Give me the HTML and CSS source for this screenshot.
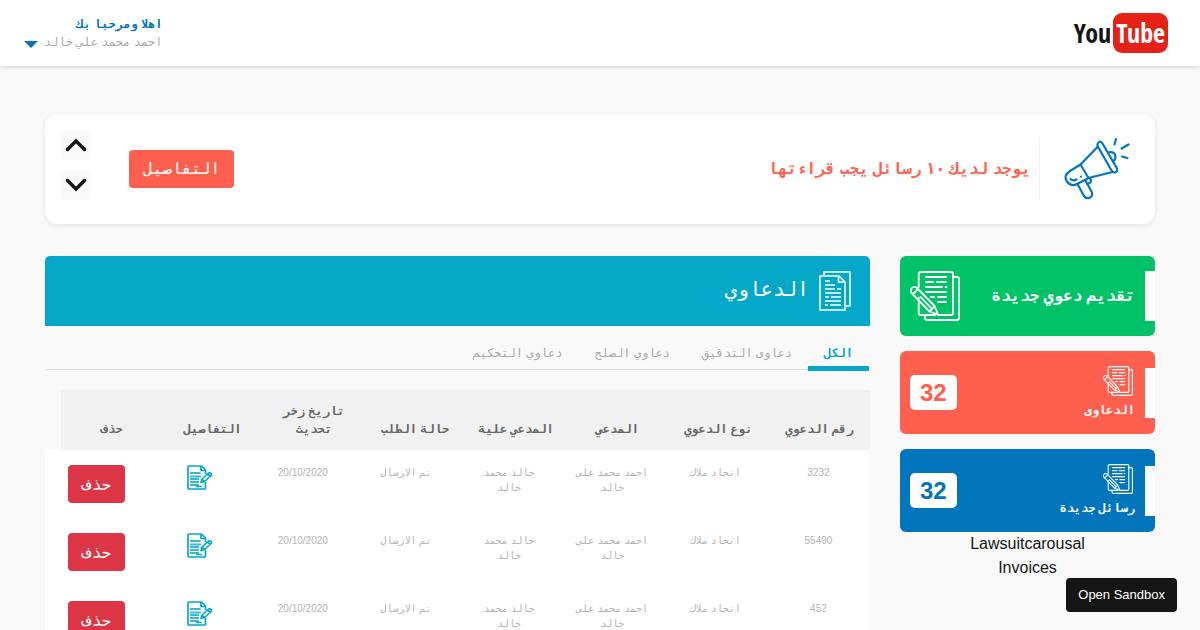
FILE: index.html
```html
<!DOCTYPE html>
<html lang="ar" dir="rtl">
<head>
<meta charset="utf-8">
<title>الدعاوي</title>
<link rel="stylesheet" href="styles.css">
</head>
<body>
<svg width="0" height="0" class="sprite" aria-hidden="true">
  <symbol id="pages" viewBox="0 0 50 50">
    <g fill="none" stroke="currentColor" stroke-width="1.8" stroke-linejoin="round" stroke-linecap="round">
      <path d="M8.700 16V3Q8.700 1 10.700 1H41Q43 1 43 3V42Q43 44 41 44H28M8.700 27V42Q8.700 44 10.700 44H25"/>
      <path d="M43 6H47Q49 6 49 8V47Q49 49 47 49H17Q15 49 15 47V44"/>
      <path d="M16 6H36M16 11H23M27 11H36M16 16H32M35.500 16H36.500M16 21H36M21 26H24M28 26H36M28 31H36"/>
      <path d="M1.500 17.500Q4 14.500 7 17L24.500 35L28 43.500L19.500 40.500L1.500 22Q0 19.500 1.500 17.500ZM3 23L8 18M19.500 40.500L24.500 35M10.500 26L22 38"/>
    </g>
  </symbol>
  <symbol id="edit" viewBox="0 0 26 26">
    <path d="M3 8H13.500M3 11.500H14M3 14H12M3 17H12M3 20H12" stroke="#05a7c8" stroke-opacity=".8" stroke-width="1.800"/>
    <g fill="none" stroke="#05a7c8" stroke-width="1.700" stroke-linejoin="round">
      <path d="M18.500 9V5L14.500 1H2Q1 1 1 2V23Q1 24 2 24H17.500Q18.500 24 18.500 23V17"/>
      <path d="M14 1V5.500H18.500M9 21.500H15"/>
      <path d="M14 17.500L15 14L21.500 8Q24.500 7.500 24.500 10L17.500 16.500ZM15 14L17.500 16.500M20.500 9L23.500 11.500"/>
    </g>
  </symbol>
</svg>

<header class="topbar">
  <a class="logo" href="#" dir="ltr" aria-label="YouTube"><span class="logo-you">You</span><span class="logo-tube">Tube</span></a>
  <button class="user" type="button">
    <span class="user-text">
      <span class="user-hello">اهلا ومرحبا بك</span>
      <span class="user-name">احمد محمد علي خالد</span>
    </span>
    <svg class="caret" viewBox="0 0 14 7" aria-hidden="true"><path d="M0 0H14L7 7Z" fill="#0275bc"/></svg>
  </button>
</header>

<main class="container">
  <section class="notice">
    <div class="notice-icon">
      <svg viewBox="0 0 68 64" aria-hidden="true">
        <g fill="none" stroke="#0275bc" stroke-width="2.200" stroke-linejoin="round" stroke-linecap="round">
          <path d="M34.500 5.500Q37 3.500 38.500 6.500L53 31.500Q54 35 50.500 35.500Q48.500 35.500 47.500 33.500L33.500 9Q33 7 34.500 5.500Z"/>
          <path d="M34 9.500L16.500 27.500L24.500 41L48.500 35"/>
          <path d="M16.500 27.500L6 34Q-1 38.500 3 44.500Q7 50 13 47L24.500 41"/>
          <path d="M13.500 47L20 59Q22.500 62.500 26 60.500Q29.500 58.500 27.500 54.500L21.500 43.500M23 47L26.500 45.500Q27.500 43 26 41"/>
          <path d="M44 15.500Q49 14 51 17.500Q52.500 22 49 24.500"/>
          <path d="M6.500 42Q9 44.500 12.500 42.500M17 39.500V39.600"/>
          <path d="M52 2L50.500 7.500M57.500 11.500L64.500 7.500M58 19.500L63.500 21"/>
        </g>
      </svg>
    </div>
    <p class="notice-text">يوجد لديك ١٠ رسائل يجب قراءتها</p>
    <button class="btn btn-coral" type="button">التفاصيل</button>
    <div class="arrows">
      <button class="arrow" type="button" aria-label="السابق"><svg viewBox="0 0 22 14"><path d="M2.500 11.500L11 3L19.500 11.500"/></svg></button>
      <button class="arrow" type="button" aria-label="التالي"><svg viewBox="0 0 22 14"><path d="M2.500 2.500L11 11L19.500 2.500"/></svg></button>
    </div>
  </section>

  <div class="columns">
    <aside class="side">
      <a class="card card-new" href="#"><span class="card-title">تقديم دعوي جديدة</span><svg class="icon-big" aria-hidden="true"><use href="#pages"/></svg></a>
      <a class="card card-cases" href="#"><span class="card-label"><svg class="icon-small" aria-hidden="true"><use href="#pages"/></svg><span>الدعاوى</span></span><span class="count">32</span></a>
      <a class="card card-mail" href="#"><span class="card-label"><svg class="icon-small" aria-hidden="true"><use href="#pages"/></svg><span>رسائل جديدة</span></span><span class="count">32</span></a>
      <div class="links"><div>Lawsuitcarousal</div><div>Invoices</div></div>
    </aside>

    <section class="main">
      <div class="panel-head">
        <svg viewBox="0 0 32 40" aria-hidden="true">
          <g fill="none" stroke="#fff" stroke-width="1.500">
            <path d="M5 4V1H31V35H27"/><path d="M1 5H20L26 11V39H1Z"/><path d="M19.500 5V11H26"/>
          </g>
          <path d="M6 10H11M6 14H16M6 18H16M18 18H22M6 22H22M6 26H10M12 26H22M6 30H22M6 34H9M11 34H22" stroke="#fff" stroke-opacity=".75" stroke-width="1.800"/>
        </svg>
        <h1>الدعاوي</h1>
      </div>
      <nav class="tabs">
        <a class="tab active" href="#">الكل</a>
        <a class="tab" href="#">دعاوى التدقيق</a>
        <a class="tab" href="#">دعاوي الصلح</a>
        <a class="tab" href="#">دعاوي التحكيم</a>
      </nav>
      <table class="cases">
        <thead>
          <tr><th>رقم الدعوي</th><th>نوع الدعوي</th><th>المدعي</th><th>المدعي علية</th><th>حالة الطلب</th><th>تاريخ زخر تحديث</th><th>التفاصيل</th><th>حذف</th></tr>
        </thead>
        <tbody>
          <tr><td>3232</td><td>اتحاد ملاك</td><td>احمد محمد علي خالد</td><td>خالد محمد خالد</td><td>تم الارسال</td><td>20/10/2020</td><td><a href="#" aria-label="التفاصيل"><svg class="icon-edit"><use href="#edit"/></svg></a></td><td><button class="btn btn-red" type="button">حذف</button></td></tr>
          <tr><td>55490</td><td>اتحاد ملاك</td><td>احمد محمد علي خالد</td><td>خالد محمد خالد</td><td>تم الارسال</td><td>20/10/2020</td><td><a href="#" aria-label="التفاصيل"><svg class="icon-edit"><use href="#edit"/></svg></a></td><td><button class="btn btn-red" type="button">حذف</button></td></tr>
          <tr><td>452</td><td>اتحاد ملاك</td><td>احمد محمد علي خالد</td><td>خالد محمد خالد</td><td>تم الارسال</td><td>20/10/2020</td><td><a href="#" aria-label="التفاصيل"><svg class="icon-edit"><use href="#edit"/></svg></a></td><td><button class="btn btn-red" type="button">حذف</button></td></tr>
        </tbody>
      </table>
    </section>
  </div>
</main>
<button class="sandbox" type="button" dir="ltr">Open Sandbox</button>
</body>
</html>
```
FILE: styles.css
```css
* { box-sizing: border-box; }
html { overflow: hidden; }
body {
  margin: 0;
  height: 100vh;
  background: #f9f9f9;
  color: #151515;
  font: 16px/24px "Liberation Sans", "DejaVu Sans Mono", sans-serif;
}
button { font: inherit; border: 0; cursor: pointer; }
a { color: inherit; text-decoration: none; }
svg { display: block; }
.sprite { position: absolute; }

.topbar {
  display: flex;
  align-items: center;
  justify-content: space-between;
  height: 66px;
  padding: 0 32px 0 24px;
  background: #fff;
  box-shadow: 0 1px 5px rgba(0, 0, 0, .16);
}
.logo { display: flex; align-items: center; gap: 2px; font: bold 26px/40px "Liberation Sans Narrow", "Open Sans Condensed", "Roboto Condensed", sans-serif; }
.logo-tube { padding: 0 3px; border-radius: 9px; background: #e62117; color: #fff; }
.user { display: flex; align-items: flex-end; gap: 6px; padding: 0; background: none; text-align: right; }
.user-text { display: flex; flex-direction: column; }
.user-hello { font-weight: bold; font-size: 12px; line-height: 18px; color: #0275bc; }
.user-name { font-size: 12px; line-height: 18px; color: #aaa; }
.caret { width: 14px; height: 7px; margin-bottom: 3px; }

.container { max-width: 1140px; margin: 0 auto; padding: 48px 15px 0; }
.notice {
  display: flex;
  align-items: center;
  height: 110px;
  padding: 0 23px 0 16px;
  border-radius: 12px;
  background: #fff;
  box-shadow: 0 1px 5px rgba(0, 0, 0, .1);
}
.notice-icon { padding-left: 24px; border-left: 1px solid #f1f1f1; }
.notice-icon svg { width: 68px; height: 64px; }
.notice-text { flex: 1; margin: 0; padding-right: 8px; color: #ff5f4f; font-weight: bold; }
.btn { height: 38px; padding: 0 14px; border-radius: 4px; color: #fff; }
.btn-coral { background: #ff5f4f; }
.btn-red { background: #dc3545; }
.arrows { display: flex; flex-direction: column; gap: 10px; margin-right: 39px; padding-bottom: 8px; }
.arrow { display: grid; place-items: center; width: 29px; height: 30px; padding: 0; border-radius: 5px; background: #f9f9f9; }
.arrow svg { width: 22px; height: 14px; fill: none; stroke: #151515; stroke-width: 3.4; stroke-linecap: round; }

.columns { display: grid; grid-template-columns: minmax(0, 255fr) minmax(0, 825fr); gap: 30px; margin-top: 32px; }
.card {
  display: flex;
  align-items: center;
  justify-content: space-between;
  height: 83px;
  margin-bottom: 15px;
  padding-left: 10px;
  border-radius: 6px;
  color: #fff;
  font-weight: bold;
}
.card::before { content: ""; width: 10px; height: 50px; margin-left: 10px; background: #fff; }
.card > :nth-child(1) { margin-left: auto; }
.card-new { height: 80px; background: #00c368; }
.card-cases { background: #ff5f4f; }
.card-mail { margin-bottom: 0; background: #0275bc; }
.card-title { font-size: 16px; }
.card-label { display: flex; flex-direction: column; gap: 5px; font-size: 12px; line-height: 18px; }
.icon-big { width: 50px; height: 50px; }
.icon-small { width: 30px; height: 30px; margin-right: 2px; }
.count { padding: 0 10px; border-radius: 5px; background: #fff; font-size: 24px; line-height: 35px; }
.card-cases .count { color: #ff5f4f; }
.card-mail .count { color: #0275bc; }
.links { text-align: center; }

.panel-head { display: flex; align-items: center; gap: 10px; height: 70px; padding: 0 19px; border-radius: 5px 5px 0 0; background: #05a7c8; color: #fff; }
.panel-head svg { width: 32px; height: 40px; }
.panel-head h1 { margin: 0; padding-bottom: 4px; font-size: 20px; font-weight: 500; line-height: 30px; }
.tabs { display: flex; height: 44px; padding-right: 1px; border-bottom: 1px solid #dee2e6; font-size: 12px; line-height: 18px; color: #aaa; }
.tab { height: 45px; padding: 18px 16px 0; }
.tab.active { border-bottom: 5px solid #05a7c8; color: #05a7c8; font-weight: bold; }
.cases { display: block; margin-top: 20px; }
.cases thead, .cases tbody { display: block; }
.cases tr { display: flex; }
.cases th, .cases td { flex: 1 1 0; min-width: 0; display: flex; justify-content: center; text-align: center; }
.cases thead tr { height: 60px; margin-left: 16px; background: #f1f1f1; }
.cases th { align-items: flex-end; padding: 0 11px 12px; font-size: 12px; line-height: 18px; color: #666; }
.cases tbody tr { height: 68px; background: #fff; }
.cases td { align-items: flex-start; padding: 15px 15px 0; font-size: 10px; line-height: 15px; color: #b3b3b3; }
.cases .btn { font-size: 16px; }
.icon-edit { width: 26px; height: 26px; }
.sandbox { position: fixed; right: 23px; bottom: 18px; height: 34px; padding: 0 12px; border-radius: 4px; background: #151515; color: #fff; font-size: 13px; }
```
